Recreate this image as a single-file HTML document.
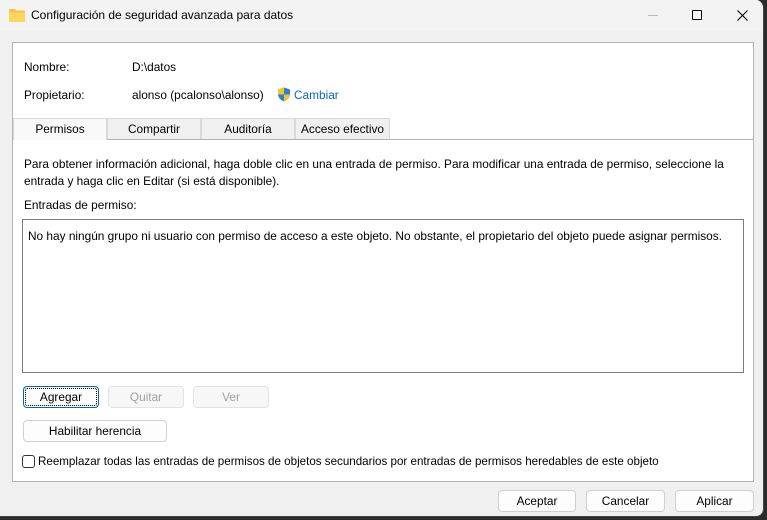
<!DOCTYPE html>
<html><head><meta charset="utf-8"><style>
*{margin:0;padding:0;box-sizing:border-box}
body{width:767px;height:520px;background:#2b2b2b;font-family:"Liberation Sans",sans-serif;font-size:11.85px;color:#000;position:relative;overflow:hidden}
.win{position:absolute;left:0;top:0;width:764px;height:517px;background:#f0f0f0;border-radius:0 8px 8px 0;overflow:hidden;border-right:1px solid #444;border-bottom:1px solid #444}
.title{position:absolute;left:0;top:0;width:100%;height:31px;background:#f3f3f3}
.a{position:absolute;white-space:nowrap}
.panel{position:absolute;left:12px;top:42px;width:742px;height:440px;background:#fff;border:1px solid #b4b4b4}
.btn{position:absolute;height:22px;border:1px solid #d0d0d0;border-radius:4px;background:#fdfdfd;text-align:center;line-height:20px}
.dis{color:#a0a0a0;background:#f7f7f7;border-color:#e3e3e3}
.tab{position:absolute;top:118px;height:21px;border:1px solid #d9d9d9;border-bottom:none;background:#f0f0f0;text-align:center;line-height:20px}
</style></head><body>
<div class="win">
<div class="title"></div>
<svg class="a" style="left:9px;top:8px" width="16" height="14" viewBox="0 0 16 14"><path d="M0 2 Q0 1 1 1 H6 L7.5 2.5 H15 Q16 2.5 16 3.5 V13 Q16 14 15 14 H1 Q0 14 0 13Z" fill="#f5c542"/><path d="M0 4.5 H16 V13 Q16 14 15 14 H1 Q0 14 0 13Z" fill="#fdd75d"/></svg>
<div class="a" style="left:31px;top:8px;font-size:12px">Configuración de seguridad avanzada para datos</div>
<div class="a" style="left:648px;top:15px;width:10px;height:1px;background:#bbb"></div>
<div class="a" style="left:692px;top:10px;width:10px;height:10px;border:1px solid #000;border-radius:1px"></div>
<svg class="a" style="left:737px;top:10px" width="11" height="11"><path d="M0.5 0.5L10.5 10.5M10.5 0.5L0.5 10.5" stroke="#000" stroke-width="1.1"/></svg>
<div class="panel"></div>
<div class="a" style="left:24px;top:60px">Nombre:</div>
<div class="a" style="left:132px;top:60px">D:\datos</div>
<div class="a" style="left:24px;top:88px">Propietario:</div>
<div class="a" style="left:132px;top:88px">alonso (pcalonso\alonso)</div>
<svg class="a" style="left:277px;top:87px" width="14" height="15" viewBox="0 0 14 15"><path d="M7 0.5 L13 2.5 V7 Q13 12 7 14.5 Q1 12 1 7 V2.5Z" fill="#2a7fd6"/><path d="M7 0.5 V7.5 H1 V2.5Z" fill="#f3c52a"/><path d="M7 7.5 H13 Q12.5 12 7 14.5Z" fill="#f3c52a"/></svg>
<div class="a" style="left:294px;top:88px;color:#0a66c2">Cambiar</div>
<div class="a" style="left:13px;top:139px;width:740px;height:1px;background:#b4b4b4"></div>
<div class="tab" style="left:13px;width:94px;background:#f9f9f9;height:22px">Permisos</div>
<div class="tab" style="left:107px;width:94px">Compartir</div>
<div class="tab" style="left:201px;width:94px">Auditoría</div>
<div class="tab" style="left:295px;width:95px">Acceso efectivo</div>
<div class="a" style="left:24px;top:156px;line-height:17px">Para obtener información adicional, haga doble clic en una entrada de permiso. Para modificar una entrada de permiso, seleccione la<br>entrada y haga clic en Editar (si está disponible).</div>
<div class="a" style="left:24px;top:198px">Entradas de permiso:</div>
<div class="a" style="left:22px;top:219px;width:722px;height:154px;border:1px solid #7a7a7a;background:#fff"></div>
<div class="a" style="left:28px;top:229px;font-size:11.85px">No hay ningún grupo ni usuario con permiso de acceso a este objeto. No obstante, el propietario del objeto puede asignar permisos.</div>
<div class="btn" style="left:23px;top:386px;width:76px;border:1px solid #0067c0;outline:1px dotted #000;outline-offset:-3px">Agregar</div>
<div class="btn dis" style="left:108px;top:386px;width:76px">Quitar</div>
<div class="btn dis" style="left:193px;top:386px;width:76px">Ver</div>
<div class="btn" style="left:23px;top:420px;width:144px">Habilitar herencia</div>
<div class="a" style="left:22px;top:455px;width:13px;height:13px;border:1px solid #333;border-radius:3px;background:#fff"></div>
<div class="a" style="left:38px;top:455px;font-size:11.6px">Reemplazar todas las entradas de permisos de objetos secundarios por entradas de permisos heredables de este objeto</div>
<div class="btn" style="left:498px;top:490px;width:78px">Aceptar</div>
<div class="btn" style="left:586px;top:490px;width:79px">Cancelar</div>
<div class="btn" style="left:675px;top:490px;width:79px">Aplicar</div>
</div>
</body></html>
